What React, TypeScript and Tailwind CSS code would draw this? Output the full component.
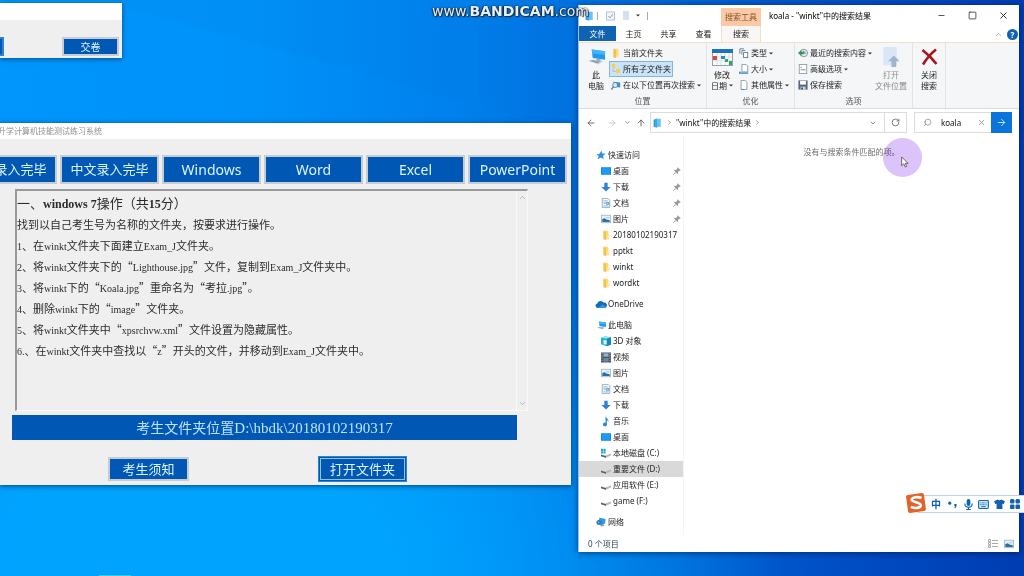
import { Fragment, useState } from 'react';
import type { ReactNode } from 'react';
import { ArrowLeft, ArrowRight, ArrowUp, ChevronDown, ChevronRight, ChevronUp, Minus, RotateCw, Search, Square, X } from 'lucide-react';

const uiFont = "font-['Noto_Sans','Noto_Sans_CJK_SC',sans-serif]";

/* ---------- icons ---------- */

function MonitorIcon({ className }: { className: string }) {
  return (
    <svg viewBox="0 0 20 18" className={className}>
      <path d="M5 1l14 2v9L6 10z" fill="#1e9bf0" />
      <path d="M5 1l14 2v4L5.500 5z" fill="#45b4fa" />
      <path d="M10 11l4 .7 1 2.300-5-.5z" fill="#7f8f9d" />
      <path d="M1 13l5-1.500 11 2-5 3.500z" fill="#c9d3db" />
      <path d="M3 13.300l3-1 8 1.500-3 1.700z" fill="#8c9caa" />
    </svg>
  );
}

function FolderIcon({ className = 'w-[10px] h-[10px]' }: { className?: string }) {
  return (
    <svg viewBox="0 0 12 12" className={className}>
      <path d="M3 1h5l1 1v9H3z" fill="#ffd977" />
      <path d="M3 1l3 1v10L3 11z" fill="#f2c14e" />
      <path d="M8.500 5L10 6v5H7z" fill="#ffe7a3" />
    </svg>
  );
}

function SubFoldersIcon() {
  return (
    <svg viewBox="0 0 12 12" className="w-[10px] h-[10px]">
      <path d="M1 0h4v5H1z" fill="#f7cd60" />
      <path d="M6 6h5v5H6z" fill="#f7cd60" />
      <path d="M2.500 6v3h3" fill="none" stroke="#a9b6a8" />
    </svg>
  );
}

function SearchPcIcon() {
  return (
    <svg viewBox="0 0 12 12" className="w-[10px] h-[10px]">
      <path d="M3 2l8 1v6L4 8z" fill="#2f95dd" />
      <circle cx="5" cy="6" r="3" fill="#d7ecfb" stroke="#4b7ba8" />
      <path d="M3 8L.5 11.500" stroke="#4b7ba8" strokeWidth="1.500" />
    </svg>
  );
}

function CalendarIcon() {
  return (
    <svg viewBox="0 0 21 17" className="w-[21px] h-[17px]">
      <rect x=".5" y=".5" width="20" height="16" fill="#fff" stroke="#8fa3b5" />
      <rect width="21" height="4" fill="#1c75ba" />
      <path d="M5 4v12M9 4v12M13 4v12M17 4v12M1 8h19M1 12h19" stroke="#d5dde4" />
      <rect x="1" y="7" width="4" height="4" fill="#d8483e" />
      <rect x="9" y="7" width="4" height="3" fill="#2b8ad6" />
      <rect x="13" y="10" width="3" height="3" fill="#2faa58" />
      <rect x="17" y="12" width="3" height="4" fill="#2faa58" />
    </svg>
  );
}

function TypeIcon() {
  return (
    <svg viewBox="0 0 12 12" className="w-[10px] h-[10px]">
      <path d="M1 7V1h5M3.500 8V3h4" fill="none" stroke="#56738d" />
      <rect x="5.500" y="5.500" width="5" height="6" fill="#fff" stroke="#56738d" />
    </svg>
  );
}

function SizeIcon() {
  return (
    <svg viewBox="0 0 12 12" className="w-[10px] h-[10px]">
      <path d="M3.500.5h5l2 2v7h-7z" fill="#fff" stroke="#7c8e9f" />
      <path d="M0 11h11M1 9v2" stroke="#2f86c9" strokeWidth="1.500" />
    </svg>
  );
}

function PropsIcon() {
  return (
    <svg viewBox="0 0 12 12" className="w-[10px] h-[10px]">
      <path d="M2.500.5h5l2 2v9h-7z" fill="#fff" stroke="#7c8e9f" />
      <path d="M2.500 11.500h4" stroke="#2f86c9" />
    </svg>
  );
}

function RecentIcon() {
  return (
    <svg viewBox="0 0 12 12" className="w-[10px] h-[10px]">
      <circle cx="7" cy="6" r="4.500" fill="#e3e9ee" stroke="#7b8a97" />
      <path d="M7 3.500V6h2.500" fill="none" stroke="#55636f" />
      <path d="M0 6l4-3.500v2h3v3H4v2z" fill="#2d9a4c" />
    </svg>
  );
}

function AdvancedIcon() {
  return (
    <svg viewBox="0 0 12 12" className="w-[10px] h-[10px]">
      <rect x="1.500" y=".5" width="9" height="11" fill="#fff" stroke="#8997a4" />
      <path d="M3 4h1.500M3 7h1.500M5 7h4" stroke="#54708b" />
    </svg>
  );
}

function SaveIcon() {
  return (
    <svg viewBox="0 0 12 12" className="w-[10px] h-[10px]">
      <path d="M.5.5h11v11H.5z" fill="#56677a" />
      <path d="M2.500 1h7v4.500h-7z" fill="#fff" />
      <path d="M3 8h6v3.500H3z" fill="#cfd7de" />
      <path d="M4 9h2v2.500H4z" fill="#3b4957" />
    </svg>
  );
}

function OpenLocationIcon() {
  return (
    <svg viewBox="0 0 18 23" className="w-[18px] h-[22px]">
      <path d="M1 1h14v19H1z" fill="#d9e6f6" />
      <path d="M12 10l6 6h-3.500v6h-5v-6H6z" fill="#9fb4cf" />
    </svg>
  );
}

function StarIcon() {
  return (
    <svg viewBox="0 0 12 12" className="w-[10px] h-[10px]">
      <path d="M6.500.5l1 3.600 4 .2-3 2.600.7 4.100L6 9l-4.100 2.200 1.500-4.200-3-1.700 4-.8z" fill="#2d8fdd" />
    </svg>
  );
}

function DesktopIcon() {
  return (
    <svg viewBox="0 0 12 12" className="w-[10px] h-[10px]">
      <rect x="0" y="1.500" width="12" height="9" fill="#1683d8" />
      <rect x="1" y="2.500" width="10" height="7" fill="#1b9af7" />
    </svg>
  );
}

function DownloadIcon() {
  return (
    <svg viewBox="0 0 12 12" className="w-[10px] h-[10px]">
      <path d="M4 1h4v5h3.500L6 11.500.5 6H4z" fill="#2e82d0" />
    </svg>
  );
}

function DocumentIcon() {
  return (
    <svg viewBox="0 0 12 12" className="w-[10px] h-[10px]">
      <path d="M1.500.5h7l2 2v9h-9z" fill="#f4f9fc" stroke="#8ba5b8" />
      <path d="M3 3.500h5M3 9.500h6" stroke="#7fa6c4" />
      <path d="M3 6h2.500M6.500 5.500h3v2h-3z" fill="none" stroke="#3d8cc4" />
    </svg>
  );
}

function PictureIcon() {
  return (
    <svg viewBox="0 0 12 12" className="w-[10px] h-[10px]">
      <rect x=".5" y="1.500" width="11" height="9" fill="#e6f2fa" stroke="#9fb3c2" />
      <path d="M1.500 9.500V6l3-1 2 1.500 4 1v2z" fill="#2f6f9f" />
      <path d="M6 4.500h4" stroke="#8ec3e6" />
    </svg>
  );
}

function CubeIcon() {
  return (
    <svg viewBox="0 0 12 12" className="w-[10px] h-[10px]">
      <path d="M0 2l5-1.500 7 1v9L6 12 0 10z" fill="#22b3cf" />
      <path d="M0 2l5-1.500 7 1-5 1.700z" fill="#8fe3ee" />
      <path d="M3 5h4v5H3z" fill="#d6f6fa" />
      <path d="M7 3.200l5-1.700v9L7 12z" fill="#1586b5" />
    </svg>
  );
}

function VideoIcon() {
  return (
    <svg viewBox="0 0 12 12" className="w-[10px] h-[11px]">
      <rect width="12" height="12" fill="#4b5560" />
      <rect x="3" y="1" width="6" height="4" fill="#8fb4cf" />
      <rect x="3" y="6.500" width="6" height="4.500" fill="#6f8798" />
      <path d="M1.200 1v10M10.800 1v10" stroke="#d4dade" strokeDasharray="1 1" />
    </svg>
  );
}

function MusicIcon() {
  return (
    <svg viewBox="0 0 12 12" className="w-[10px] h-[11px]">
      <path d="M6 0c.3 2.500 3.500 3 3 6.500C8.500 5 7.500 4.700 7 4.600V9.500a2.300 2.300 0 1 1-1.500-2.100V0z" fill="#1d86d8" />
    </svg>
  );
}

function DriveIcon({ system = false }: { system?: boolean }) {
  return (
    <svg viewBox="0 0 12 12" className="w-[10px] h-[10px]">
      {system && <path d="M0 1h2.500v2.500H0zM3 1h2.500v2.500H3zM0 4h2.500v2.500H0zM3 4h2.500v2.500H3z" fill="#1aa5e8" />}
      <path d="M0 7.500l5 1.500 7-2.500v2.500l-6 2.700-6-2z" fill="#b5bcc2" />
      <path d="M0 8l6 1.800v2L0 10z" fill="#565e66" />
    </svg>
  );
}

function CloudIcon() {
  return (
    <svg viewBox="0 0 14 10" className="w-[12px] h-[9px]">
      <path d="M3 9a2.700 2.700 0 0 1-.3-5.300A4 4 0 0 1 9.800 2.800 3.200 3.200 0 0 1 11.500 9z" fill="#0f6cbd" />
      <path d="M3 9l6-4 4 3c-.5.700-1 1-1.500 1z" fill="#2d97e6" />
    </svg>
  );
}

function NetworkIcon() {
  return (
    <svg viewBox="0 0 12 12" className="w-[10px] h-[10px]">
      <path d="M4 1l7.500 1.500-.5 5L7 10 3 8z" fill="#2f97dd" />
      <circle cx="3.500" cy="6.500" r="3" fill="#3579b4" />
      <path d="M2 5.500l2 .5-.5 2.500z" fill="#86c6ec" />
      <path d="M5 10l4-1 1 1.500-4 1z" fill="#8696a4" />
    </svg>
  );
}

function PinIcon() {
  return (
    <svg viewBox="0 0 12 12" className="w-[8px] h-[8px]">
      <path d="M7 .5L11.500 5l-1 .7-1-.2L7.500 7.500l.2 2-1 1L1.500 5.300l1-1 2 .2L6.500 2.500l-.2-1z" fill="#929ba3" />
      <path d="M4 8L.5 11.500" stroke="#929ba3" strokeWidth="1.300" />
    </svg>
  );
}

function SearchFolderIcon() {
  return (
    <svg viewBox="0 0 12 12" className="w-[10px] h-[10px]">
      <path d="M2 2l4-1.500V10l-4 1z" fill="#2796dc" />
      <path d="M4 1h6.500v9.500L4 11.500z" fill="#68c3f2" />
      <path d="M4 1l2 1v9.500L4 11z" fill="#3daae6" />
    </svg>
  );
}

function Caret() {
  return (
    <svg viewBox="0 0 4 3" className="w-[4px] h-[3px] shrink-0">
      <path d="M0 .5h4L2 2.500z" fill="#333" />
    </svg>
  );
}

/* ---------- exam windows ---------- */

// Western runs are set in a serif face, one step smaller than the Chinese text
function ExamText({ text }: { text: string }) {
  return (
    <>
      {text.split(/([A-Za-z0-9_.]+)/).map((part, i) =>
        i % 2 ? (
          <span key={i} className="font-['Liberation_Serif',serif] text-[10px]">{part}</span>
        ) : (
          <Fragment key={i}>{part}</Fragment>
        ),
      )}
    </>
  );
}

const tabs = ['英文录入完毕', '中文录入完毕', 'Windows', 'Word', 'Excel', 'PowerPoint'];

const questions = [
  '找到以自己考生号为名称的文件夹，按要求进行操作。',
  '1、在winkt文件夹下面建立Exam_J文件夹。',
  '2、将winkt文件夹下的“Lighthouse.jpg”文件，复制到Exam_J文件夹中。',
  '3、将winkt下的“Koala.jpg”重命名为“考拉.jpg”。',
  '4、删除winkt下的“image”文件夹。',
  '5、将winkt文件夹中“xpsrchvw.xml”文件设置为隐藏属性。',
  '6.、在winkt文件夹中查找以“z”开头的文件，并移动到Exam_J文件夹中。',
];

function TimerWindow() {
  return (
    <section className="absolute left-0 top-[3px] w-[122px] overflow-hidden bg-[#efefef] shadow-[0_1px_5px_rgba(0,30,70,0.6)]">
      <div className="h-[17px] bg-white" />
      <div className="flex items-center justify-between pt-[17px] pb-[2px] pr-[3px]">
        <button aria-label="返回" className="h-[19px] w-1 border-2 border-l-0 border-[#2a84cf] bg-[#0058b4]" />
        <button className="h-[19px] w-[57px] border-2 border-[#c6ccd3] bg-[#0058b4] text-[10px] leading-[14px] text-[#e4f6ff]">交卷</button>
      </div>
    </section>
  );
}

function ExamWindow() {
  return (
    <section className="absolute left-0 top-[123px] w-[571px] overflow-hidden bg-[#efefef] shadow-[0_1px_5px_rgba(0,30,70,0.7)]">
      <header className="flex h-4 items-center bg-white text-[8px] text-[#8f8f8f]">
        <h1 className="-ml-[2px] whitespace-nowrap">升学计算机技能测试练习系统</h1>
      </header>

      <div className="flex justify-end gap-[3px] pt-4 pr-1">
        {tabs.map((tab, i) => (
          <button
            key={tab}
            className={`h-[29px] w-[99px] shrink-0 whitespace-nowrap border-2 border-[#c6ccd3] bg-[#0058b4] text-[#dcf4ff] ${i < 2 ? 'text-[13px]' : 'text-[14px]'}`}
          >
            {tab}
          </button>
        ))}
      </div>

      <div className="ml-[15px] mr-[43px] mt-[5px] flex h-[222px] border border-t-2 border-l-2 border-[#fafafa] border-t-[#999] border-l-[#999]">
        <div lang="zh-CN" className="min-w-0 flex-1 whitespace-nowrap pt-px font-['Noto_Sans_CJK_SC',sans-serif] text-[11px] leading-[21px] text-[#2b2b2b]">
          <h2 className="h-[22px] text-[13px]">
            一、<b className="font-['Liberation_Serif',serif] text-[12px]">windows 7</b>操作（共<b className="font-['Liberation_Serif',serif] text-[12px]">15</b>分）
          </h2>
          {questions.map((q) => (
            <p key={q} className="h-[21px]"><ExamText text={q} /></p>
          ))}
        </div>
        <div className="flex w-[11px] flex-col items-center justify-between border-l border-[#f9f9f9] py-[2px] text-[#a8a8a8]">
          <ChevronUp size={9} />
          <ChevronDown size={9} />
        </div>
      </div>

      <div className="ml-3 mr-[54px] mt-1 h-[25px] bg-[#0058b4] text-center text-[14px] leading-[25px] text-[#bfe2fb]">
        考生文件夹位置<span className="font-['Liberation_Serif',serif] text-[15px]">D:\hbdk\20180102190317</span>
      </div>

      <div className="flex items-center gap-[129px] pt-4 pb-[3px] pl-[108px] text-[13px] text-[#dcf4ff]">
        <button className="h-6 w-[81px] border-2 border-[#c6ccd3] bg-[#0058b4] leading-5">考生须知</button>
        <button className="h-[26px] w-[89px] border border-[#2a84cf] bg-[#0058b4] p-px">
          <span className="block border border-[#8fc3ea] leading-5">打开文件夹</span>
        </button>
      </div>
    </section>
  );
}

/* ---------- file explorer ---------- */

function RibbonItem({ icon, label, caret, active }: { icon: ReactNode; label: string; caret?: boolean; active?: boolean }) {
  return (
    <button
      className={`flex h-4 items-center gap-[2px] self-start whitespace-nowrap border px-px ${active ? 'border-[#7fb5e0] bg-[#cbe3f7]' : 'border-transparent'}`}
    >
      {icon}
      {label}
      {caret && <Caret />}
    </button>
  );
}

function RibbonGroup({ label, className, children }: { label: string; className: string; children: ReactNode }) {
  return (
    <div className={`flex shrink-0 flex-col justify-between border-r border-[#e2e3e4] pt-[2px] pb-px ${className}`}>
      <div className="flex">{children}</div>
      <div className="text-center leading-3 text-[#555]">{label}</div>
    </div>
  );
}

function BigButton({ icon, lines, caret, className }: { icon: ReactNode; lines: string[]; caret?: boolean; className: string }) {
  return (
    <button className={`flex shrink-0 flex-col items-center whitespace-nowrap leading-[11px] ${className}`}>
      <span className="flex h-6 items-center">{icon}</span>
      <span>{lines[0]}</span>
      <span className="flex items-center gap-[2px]">
        {lines[1]}
        {caret && <Caret />}
      </span>
    </button>
  );
}

function Ribbon() {
  return (
    <div className="flex h-[67px] shrink-0 border-t border-b border-t-[#f6dfc8] border-b-[#dadbdc] bg-[#f5f6f7]">
      <RibbonGroup label="位置" className="w-[128px]">
        <BigButton className="w-[30px] pl-1" icon={<MonitorIcon className="h-[18px] w-[19px]" />} lines={['此', '电脑']} />
        <div className="flex flex-col">
          <RibbonItem icon={<FolderIcon />} label="当前文件夹" />
          <RibbonItem icon={<SubFoldersIcon />} label="所有子文件夹" active />
          <RibbonItem icon={<SearchPcIcon />} label="在以下位置再次搜索" caret />
        </div>
      </RibbonGroup>
      <RibbonGroup label="优化" className="w-[88px]">
        <BigButton className="w-[30px]" icon={<CalendarIcon />} lines={['修改', '日期']} caret />
        <div className="flex flex-col">
          <RibbonItem icon={<TypeIcon />} label="类型" caret />
          <RibbonItem icon={<SizeIcon />} label="大小" caret />
          <RibbonItem icon={<PropsIcon />} label="其他属性" caret />
        </div>
      </RibbonGroup>
      <RibbonGroup label="选项" className="w-[118px]">
        <div className="flex min-w-0 flex-1 flex-col pl-px">
          <RibbonItem icon={<RecentIcon />} label="最近的搜索内容" caret />
          <RibbonItem icon={<AdvancedIcon />} label="高级选项" caret />
          <RibbonItem icon={<SaveIcon />} label="保存搜索" />
        </div>
        <BigButton className="w-[42px] text-[#8a8a8a]" icon={<OpenLocationIcon />} lines={['打开', '文件位置']} />
      </RibbonGroup>
      <div className="flex w-[33px] shrink-0 justify-center border-r border-[#e2e3e4] pt-[2px]">
        <BigButton
          className="w-8"
          icon={
            <svg viewBox="0 0 17 17" className="h-[18px] w-[17px]">
              <path d="M1.500 1.500C6 5 12 11 15.500 15.500M15 1C10 5 5 11 2 16" fill="none" stroke="#a3171d" strokeWidth="2.600" />
            </svg>
          }
          lines={['关闭', '搜索']}
        />
      </div>
    </div>
  );
}

function NavItem({ icon, label, top, pin, active }: { icon: ReactNode; label: string; top?: boolean; pin?: boolean; active?: boolean }) {
  return (
    <li>
      <a href="#" className={`flex h-4 items-center gap-px pr-[2px] ${top ? 'pl-4' : 'pl-[21px]'} ${active ? 'bg-[#d9d9d9]' : ''}`}>
        <span className="flex w-3 shrink-0 items-center justify-center">{icon}</span>
        <span className="whitespace-nowrap">{label}</span>
        {pin && <span className="ml-auto"><PinIcon /></span>}
      </a>
    </li>
  );
}

function NavPane() {
  return (
    <nav className="w-[105px] shrink-0 space-y-[5px] border-r border-[#f4f4f4] pt-[11px]">
      <ul>
        <NavItem top icon={<StarIcon />} label="快速访问" />
        <NavItem icon={<DesktopIcon />} label="桌面" pin />
        <NavItem icon={<DownloadIcon />} label="下载" pin />
        <NavItem icon={<DocumentIcon />} label="文档" pin />
        <NavItem icon={<PictureIcon />} label="图片" pin />
        <NavItem icon={<FolderIcon />} label="20180102190317" />
        <NavItem icon={<FolderIcon />} label="pptkt" />
        <NavItem icon={<FolderIcon />} label="winkt" />
        <NavItem icon={<FolderIcon />} label="wordkt" />
      </ul>
      <ul>
        <NavItem top icon={<CloudIcon />} label="OneDrive" />
      </ul>
      <ul>
        <NavItem top icon={<MonitorIcon className="h-[9px] w-[11px]" />} label="此电脑" />
        <NavItem icon={<CubeIcon />} label="3D 对象" />
        <NavItem icon={<VideoIcon />} label="视频" />
        <NavItem icon={<PictureIcon />} label="图片" />
        <NavItem icon={<DocumentIcon />} label="文档" />
        <NavItem icon={<DownloadIcon />} label="下载" />
        <NavItem icon={<MusicIcon />} label="音乐" />
        <NavItem icon={<DesktopIcon />} label="桌面" />
        <NavItem icon={<DriveIcon system />} label="本地磁盘 (C:)" />
        <NavItem icon={<DriveIcon />} label="重要文件 (D:)" active />
        <NavItem icon={<DriveIcon />} label="应用软件 (E:)" />
        <NavItem icon={<DriveIcon />} label="game (F:)" />
      </ul>
      <ul>
        <NavItem top icon={<NetworkIcon />} label="网络" />
      </ul>
    </nav>
  );
}

function ExplorerWindow() {
  const [query, setQuery] = useState('koala');

  return (
    <section className="absolute bottom-6 left-[578px] right-[5px] top-[5px] flex flex-col overflow-hidden border-l border-[#8fc4ee] bg-white text-[8px] leading-3 text-[#222] shadow-[0_1px_6px_rgba(0,15,60,0.6)]">
      <header className="flex h-[21px] shrink-0 items-center">
        <div className="flex w-[142px] items-center gap-2 pl-[5px]">
          <div className="flex items-center gap-[3px]">
            <SearchFolderIcon />
            <span className="h-2 w-px bg-[#aaa]" />
          </div>
          <svg viewBox="0 0 10 10" className="h-[10px] w-[9px]">
            <rect x=".5" y=".5" width="9" height="9" fill="#f3f7fb" stroke="#a9bdd1" />
            <path d="M2.500 5l2 2 3-4" fill="none" stroke="#7793b0" />
          </svg>
          <div className="flex items-center gap-[7px]">
            <span className="h-[9px] w-[6px] bg-[#d5dff0]" />
            <Caret />
            <span className="h-2 w-px bg-[#aaa]" />
          </div>
        </div>
        <div className="flex h-[18px] w-10 items-end justify-center self-end bg-[#fcc9a6] pb-[3px] text-[#85502b]">搜索工具</div>
        <h1 className="ml-2 whitespace-nowrap text-black">koala - "winkt"中的搜索结果</h1>
        <div className="ml-auto flex items-center text-[#222]">
          <button aria-label="最小化" className="flex w-[31px] justify-center"><Minus size={9} strokeWidth={2} /></button>
          <button aria-label="最大化" className="flex w-[31px] justify-center"><Square size={9} strokeWidth={2} /></button>
          <button aria-label="关闭" className="flex w-[31px] justify-center"><X size={11} strokeWidth={2} /></button>
        </div>
      </header>

      <div className="flex h-4 shrink-0 items-center">
        <button className="h-[15px] w-[37px] self-start bg-[#0f63b0] text-white">文件</button>
        <button className="w-[35px]">主页</button>
        <button className="w-[35px]">共享</button>
        <button className="w-[35px]">查看</button>
        <button className="h-4 w-10 border-x border-[#f6dfc8] bg-[#f9f7f5]">搜索</button>
        <div className="ml-auto flex items-center gap-1 pr-px">
          <button aria-label="折叠功能区"><ChevronUp size={9} className="text-[#999]" /></button>
          <button aria-label="帮助" className="h-[11px] w-[11px] rounded-full bg-[#0f63b0] font-bold leading-[11px] text-white">?</button>
        </div>
      </div>

      <Ribbon />

      <div className="flex h-[27px] shrink-0 items-center px-[7px] text-[#555]">
        <div className="flex w-[64px] items-center">
          <button aria-label="后退"><ArrowLeft size={10} /></button>
          <button aria-label="前进" className="ml-[11px] text-[#c4c4c4]"><ArrowRight size={10} /></button>
          <button aria-label="最近位置" className="ml-[7px]"><ChevronDown size={7} /></button>
          <button aria-label="上移" className="ml-[5px]"><ArrowUp size={10} /></button>
        </div>
        <div className="flex h-[21px] min-w-0 flex-1 items-center border border-[#dcdcdc]">
          <span className="ml-px mr-1"><SearchFolderIcon /></span>
          <ChevronRight size={7} />
          <span className="mx-[3px] whitespace-nowrap text-[#111]">"winkt"中的搜索结果</span>
          <ChevronRight size={7} />
          <button aria-label="展开地址" className="ml-auto mr-[7px]"><ChevronDown size={8} /></button>
          <button aria-label="刷新" className="flex h-full w-[22px] items-center justify-center border-l border-[#dcdcdc]"><RotateCw size={9} /></button>
        </div>
        <div className="ml-[7px] flex h-[21px] w-[98px] items-center border border-[#dcdcdc]">
          <Search size={9} className="ml-2 shrink-0 -scale-x-100 text-[#888]" />
          <input
            aria-label="搜索"
            value={query}
            onChange={(e) => setQuery(e.target.value)}
            className="ml-[9px] w-8 min-w-0 flex-1 text-[#111] outline-none"
          />
          <button aria-label="清除" onClick={() => setQuery('')} className="mr-[5px]"><X size={9} className="text-[#888]" /></button>
          <button aria-label="开始搜索" className="-my-px -mr-px flex h-[21px] w-[21px] shrink-0 items-center justify-center bg-[#0a74da] text-[#cdeaff]"><ArrowRight size={11} /></button>
        </div>
      </div>

      <div className="flex min-h-0 flex-1">
        <NavPane />
        <main className="flex-1 pt-[10px] text-center text-[#6d6d6d]">没有与搜索条件匹配的项。</main>
      </div>

      <footer className="flex h-[17px] shrink-0 items-center justify-between pl-[9px] pr-[5px] text-[#33475c]">
        <span>0 个项目</span>
        <div className="flex items-center gap-[6px]">
          <button aria-label="详细信息">
            <svg viewBox="0 0 10 9" className="h-[9px] w-[10px]">
              <path d="M.5.5h2v2h-2zM.5 3.500h2v2h-2zM.5 6.500h2v2h-2zM4 1.500h6M4 4.500h6M4 7.500h6" fill="none" stroke="#aaa" />
            </svg>
          </button>
          <button aria-label="大图标"><PictureIcon /></button>
        </div>
      </footer>
    </section>
  );
}

/* ---------- overlays ---------- */

function ImeBar() {
  return (
    <div className="absolute right-0 top-[495px] flex h-[18px] w-[107px] items-center justify-between border border-r-0 border-[#b9d5e6] bg-white pl-3 pr-1 text-[#0f62ac]">
      <svg viewBox="0 0 22 22" aria-label="搜狗输入法" className="absolute -left-[13px] -top-[4px] h-[22px] w-[22px]">
        <rect x="2" y="2" width="18" height="18" rx="2" transform="rotate(-8 11 11)" fill="#e2622a" />
        <path d="M16.500 6c-3-1.500-9.500-1.200-9.800 1.700C6.500 10.500 16 10 15.800 13.300c-.2 2.900-6 3.400-10 1.500" fill="none" stroke="#fff" strokeWidth="2.600" />
      </svg>
      <button className="w-3 text-[10px] font-bold leading-4">中</button>
      <svg viewBox="0 0 12 12" className="h-[11px] w-[11px]">
        <circle cx="3" cy="4.500" r="1.700" fill="currentColor" />
        <path d="M8 5.500h2.400c.3 2-.2 3.600-1.800 4.500l-.6-.7c.7-.6 1-1.100 1-1.700H8z" fill="currentColor" />
      </svg>
      <svg viewBox="0 0 12 12" className="h-[11px] w-[11px]">
        <rect x="4" y="0" width="4" height="7.500" rx="2" fill="currentColor" />
        <path d="M2 5c0 5.500 8 5.500 8 0M6 9v2.500M3.500 11.500h5" fill="none" stroke="currentColor" strokeWidth="1.200" />
      </svg>
      <svg viewBox="0 0 12 10" className="h-[9px] w-[11px]">
        <rect x=".6" y=".6" width="10.800" height="8.800" rx="1" fill="#d3e8f6" stroke="currentColor" strokeWidth="1.200" />
        <path d="M2.500 3.200h7M2.500 5.200h7" stroke="currentColor" strokeDasharray="1 .6" />
        <path d="M3.500 7.400h5" stroke="currentColor" />
      </svg>
      <svg viewBox="0 0 12 11" className="h-[10px] w-[11px]">
        <path d="M4 .5c.8 1.200 3.200 1.200 4 0L12 2.500l-1.300 3-1.500-.4V11H2.800V5.100l-1.500.4L0 2.500z" fill="currentColor" />
      </svg>
      <svg viewBox="0 0 12 12" className="h-[10px] w-[10px]">
        <rect x="0" y="0" width="5.400" height="5.400" rx="1.800" fill="currentColor" />
        <rect x="6.600" y="0" width="5.400" height="5.400" rx="1.800" fill="currentColor" />
        <rect x="0" y="6.600" width="5.400" height="5.400" rx="1.200" fill="currentColor" />
        <rect x="6.600" y="6.600" width="5.400" height="5.400" rx="1.200" fill="currentColor" />
      </svg>
    </div>
  );
}

function Pointer() {
  return (
    <div className="pointer-events-none absolute left-[883px] top-[138px] h-[39px] w-[39px] rounded-full bg-[#dcc3fa] mix-blend-multiply">
      <svg viewBox="0 0 12 17" className="absolute left-[18px] top-[18px] h-[12px] w-[8px]">
        <path d="M1 1v13l3-2.800L6.500 16l2-1-2.300-4.500H10.500z" fill="#fff" stroke="#555" strokeWidth="1.300" />
      </svg>
    </div>
  );
}

export default function App() {
  return (
    <div className={`relative h-screen w-full overflow-hidden bg-[linear-gradient(90deg,#0096fb_0%,#0092f8_25%,#0080ec_45%,#006cda_60%,#0050c6_80%,#003cb2_100%)] ${uiFont}`}>
      <div className="absolute inset-0 bg-[radial-gradient(ellipse_at_20%_100%,#00a4ff_0%,#00a4ff_15%,transparent_50%)]" />
      <svg viewBox="0 0 1024 576" preserveAspectRatio="none" className="absolute inset-0 h-full w-full">
        <path d="M120 6L576 132V0H120z" fill="#0070dc" opacity=".08" />
      </svg>

      <TimerWindow />
      <ExamWindow />
      <ExplorerWindow />
      <ImeBar />
      <Pointer />

      <div className="absolute left-[432px] top-[2px] whitespace-nowrap font-['DejaVu_Sans',sans-serif] text-[14px] leading-[18px] text-[#e3f0fb] [text-shadow:0_0_2px_#1a2a3c,1px_1px_1px_#1a2a3c,-1px_0_1px_#1a2a3c]">
        www.<b>BANDICAM</b>.com
      </div>
      <div className="absolute bottom-0 left-[99px] h-px w-8 bg-[#3cc9ff]" />
    </div>
  );
}
